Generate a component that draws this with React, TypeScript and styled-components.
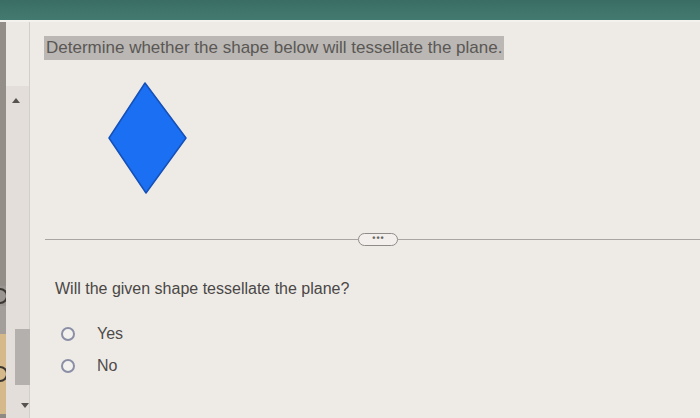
import styled, { createGlobalStyle } from "styled-components";

const GlobalStyle = createGlobalStyle`
  html, body {
    margin: 0;
    padding: 0;
    background: #ebe7e3;
  }
  * {
    box-sizing: border-box;
  }
`;

const Page = styled.div`
  width: 700px;
  height: 418px;
  display: flex;
  flex-direction: column;
  overflow: hidden;
  font-family: "Liberation Sans", Arial, sans-serif;
`;

const TopBar = styled.div`
  height: 22px;
  flex-shrink: 0;
  background: linear-gradient(180deg, #3a6e64 0%, #437a70 100%);
  border-bottom: 2px solid #f4f2ef;
`;

const Body = styled.div`
  flex: 1;
  display: flex;
  min-height: 0;
`;

const EdgeStrip = styled.div`
  width: 6px;
  flex-shrink: 0;
  display: flex;
  flex-direction: column;
  background: #8f8984;
  overflow: hidden;
`;

const EdgeBlock = styled.div<{ $h: number; $bg: string }>`
  height: ${(p) => p.$h}px;
  flex-shrink: 0;
  background: ${(p) => p.$bg};
  display: flex;
  align-items: center;
  justify-content: flex-end;
`;

const EdgeRing = styled.div`
  width: 16px;
  height: 16px;
  flex-shrink: 0;
  border-radius: 50%;
  border: 2px solid #3a3632;
  margin-right: -2px;
`;

const ScrollColumn = styled.div`
  width: 24px;
  flex-shrink: 0;
  display: flex;
  flex-direction: column;
  background: #e5e0db;
  border-right: 1px solid #d3cec9;
`;

const ScrollTop = styled.div`
  height: 64px;
  flex-shrink: 0;
  background: #ece8e4;
`;

const ScrollTrack = styled.div`
  flex: 1;
  display: flex;
  flex-direction: column;
  align-items: center;
  padding: 12px 0 10px 4px;
  background: #e3ded9;
`;

const Arrow = styled.div<{ $down?: boolean }>`
  width: 0;
  height: 0;
  border-left: 4px solid transparent;
  border-right: 4px solid transparent;
  ${(p) =>
    p.$down
      ? "border-top: 5px solid #55524f; margin-left: 10px;"
      : "border-bottom: 5px solid #55524f; margin-right: 8px;"}
`;

const Spacer = styled.div`
  flex: 1;
`;

const Thumb = styled.div`
  width: 17px;
  height: 56px;
  margin-left: 8px;
  background: #b3b0ad;
  margin-bottom: 18px;
`;

const Panel = styled.main`
  flex: 1;
  display: flex;
  flex-direction: column;
  background: #eeebe7;
  padding: 14px 0 0 14px;
`;

const Prompt = styled.div`
  align-self: flex-start;
  background: #bab7b4;
  color: #5a5754;
  font-size: 17px;
  line-height: 24px;
  padding: 0 2px 0 2px;
`;

const Figure = styled.div`
  padding: 21px 0 0 63px;
  height: 173px;
`;

const DividerRow = styled.div`
  display: flex;
  align-items: center;
  margin-left: 1px;
`;

const Rule = styled.div<{ $w?: number }>`
  height: 1px;
  background: #a8a5a2;
  ${(p) => (p.$w ? `width: ${p.$w}px;` : "flex: 1;")}
`;

const MorePill = styled.button`
  width: 40px;
  height: 13px;
  border: 1px solid #8e8b88;
  border-radius: 7px;
  background: #f2efec;
  color: #6a6764;
  font-size: 9px;
  line-height: 9px;
  letter-spacing: 1px;
  padding: 0 0 3px 1px;
  font-family: "Liberation Sans", Arial, sans-serif;
  font-weight: bold;
`;

const Question = styled.div`
  margin: 34px 0 0 11px;
  font-size: 16px;
  color: #4a4745;
`;

const Options = styled.div`
  display: flex;
  flex-direction: column;
  gap: 13px;
  margin: 26px 0 0 17px;
`;

const Option = styled.label`
  display: flex;
  align-items: center;
  gap: 22px;
  font-size: 16px;
  color: #4f4c4a;
  line-height: 19px;
`;

const Radio = styled.span`
  width: 14px;
  height: 14px;
  border-radius: 50%;
  border: 2px solid #8a8fa6;
  background: #f3f1ee;
`;

export default function App() {
  return (
    <>
      <GlobalStyle />
      <Page>
        <TopBar />
        <Body>
          <EdgeStrip>
            <EdgeBlock $h={264} $bg="#948e89" />
            <EdgeBlock $h={20} $bg="#9a9590">
              <EdgeRing />
            </EdgeBlock>
            <EdgeBlock $h={28} $bg="#a39e99" />
            <EdgeBlock $h={80} $bg="#d6b98a">
              <EdgeRing />
            </EdgeBlock>
          </EdgeStrip>
          <ScrollColumn>
            <ScrollTop />
            <ScrollTrack>
              <Arrow />
              <Spacer />
              <Thumb />
              <Arrow $down />
            </ScrollTrack>
          </ScrollColumn>
          <Panel>
            <Prompt>Determine whether the shape below will tessellate the plane.</Prompt>
            <Figure>
              <svg width="82" height="114" viewBox="0 0 82 114">
                <polygon
                  points="38,2 79,57 39,112 2,57"
                  fill="#1b6ff2"
                  stroke="#1450b8"
                  strokeWidth="1.5"
                  strokeLinejoin="round"
                />
              </svg>
            </Figure>
            <DividerRow>
              <Rule $w={313} />
              <MorePill type="button">•••</MorePill>
              <Rule />
            </DividerRow>
            <Question>Will the given shape tessellate the plane?</Question>
            <Options>
              <Option>
                <Radio />
                Yes
              </Option>
              <Option>
                <Radio />
                No
              </Option>
            </Options>
          </Panel>
        </Body>
      </Page>
    </>
  );
}
